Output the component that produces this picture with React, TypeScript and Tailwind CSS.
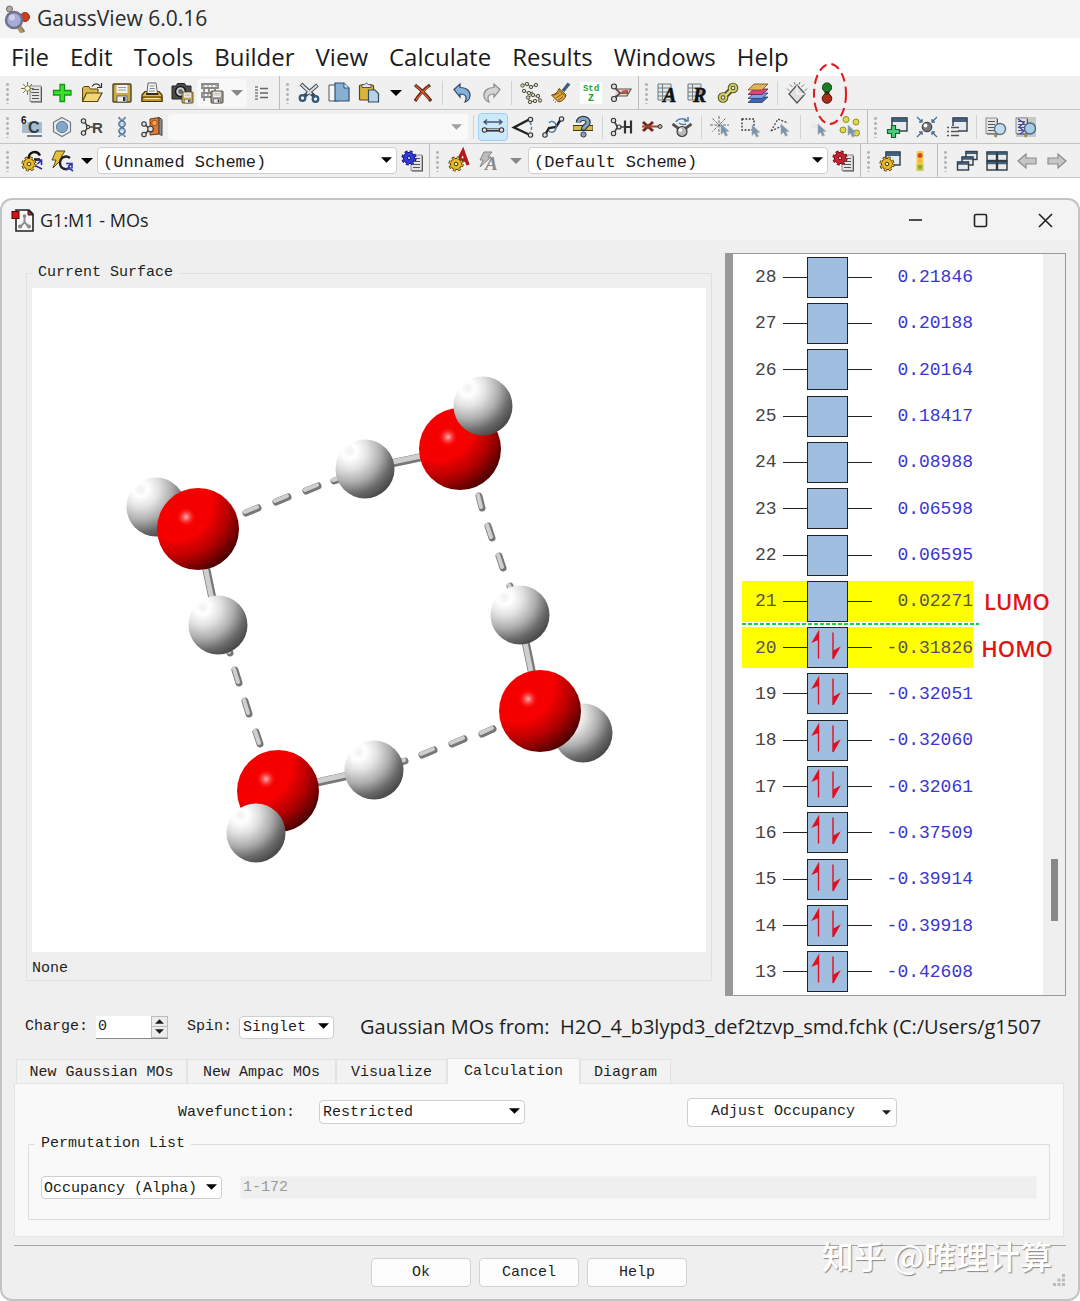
import React from "react";

/* ---------- small shapes shared by the toolbar icons ---------- */

type XY = { x?: number; y?: number };

const Gear = ({ x = 8, y = 13, fill = "#e8b92c", edge = "#4a3800", hub = "#fff2b0" }: XY & { fill?: string; edge?: string; hub?: string }) => (
  <g>
    <circle cx={x} cy={y} r="6" fill="none" stroke={edge} strokeWidth="3.2" strokeDasharray="2.7 2" />
    <circle cx={x} cy={y} r="5.6" fill={fill} stroke={edge} strokeWidth="1" />
    <circle cx={x} cy={y} r="6" fill="none" stroke={fill} strokeWidth="1.6" strokeDasharray="2 2.7" strokeDashoffset="-.35" />
    <circle cx={x} cy={y} r="1.8" fill={hub} stroke={edge} strokeWidth="1" />
  </g>
);

const Sheet = ({ x = 9, y = 5 }: XY) => (
  <g>
    <rect x={x + 1} y={y + 1} width="11" height="15.5" fill="#444" />
    <rect x={x} y={y} width="11" height="15.5" fill="#e2e5e8" stroke="#777" strokeWidth=".8" />
    <path d={`M${x + 2} ${y + 3.5}h7M${x + 2} ${y + 6.5}h7M${x + 2} ${y + 9.5}h7M${x + 2} ${y + 12.5}h7`} stroke="#555" strokeWidth="1.2" />
  </g>
);

const Cursor = ({ x = 11, y = 9 }: XY) => (
  <path transform={`translate(${x} ${y})`} d="M0 0v10.5l2.6-2.2 1.8 4 2.2-1-1.8-3.8h3.4z" fill="#7b93ab" stroke="#a8b4c0" strokeWidth=".6" />
);

const Atom = ({ x = 0, y = 0, r = 2.2 }: XY & { r?: number }) => (
  <circle cx={x} cy={y} r={r} fill="#e2e2e2" stroke="#333" strokeWidth="1.1" />
);

const Win = ({ x = 5, y = 2, w = 16, h = 13 }: XY & { w?: number; h?: number }) => (
  <g>
    <rect x={x} y={y} width={w} height={h} fill="#e6ebef" stroke="#303840" strokeWidth="1.4" />
    <rect x={x} y={y} width={w} height={h * 0.28} fill="#3f6285" stroke="#303840" strokeWidth=".6" />
  </g>
);

const Disk = ({ x = 2, y = 2, s = 18, fill = "#c9a94a" }: XY & { s?: number; fill?: string }) => (
  <g transform={`translate(${x} ${y}) scale(${s / 18})`}>
    <rect width="18" height="18" rx="1" fill={fill} stroke="#4d4420" strokeWidth="1.4" />
    <rect x="3.5" y="1" width="11" height="8" fill="#f4f4f4" />
    <path d="M5 3.5h8M5 6h8" stroke="#999" />
    <rect x="4" y="12" width="10" height="6" fill="#eee" stroke="#555" strokeWidth=".8" />
    <rect x="10" y="13" width="2.5" height="4" fill="#333" />
  </g>
);

/* ---------- toolbar icons, 22 x 22 ---------- */

const icons: Record<string, React.ReactNode> = {
  new: (
    <>
      <Sheet x={9} y={4} />
      <path d="M6.500 0v13M0 6.500h13M2 2l9 9M11 2l-9 9" stroke="#77744c" strokeWidth="1" />
      <circle cx="6.500" cy="6.500" r="2.600" fill="#fffbd0" stroke="#8b8640" />
    </>
  ),
  add: <path d="M9 2.500h4.500v6h6.500v4.500h-6.500v6.500h-4.500V13H2.500V8.500H9z" fill="#3fe02f" stroke="#0f9c10" strokeWidth="1.300" />,
  open: (
    <>
      <path d="M1.500 19V6l1.500-1.500h5L9.500 7H17v4" fill="#d9b64e" stroke="#59470f" />
      <path d="M1.500 19.500 5.500 11H21l-4.500 8.500z" fill="#f3d677" stroke="#59470f" strokeWidth="1.200" />
      <path d="M11 4.500c2-3.500 6-3.500 8.500 0M20.500 1v4.500H16" fill="none" stroke="#333" strokeWidth="1.200" />
    </>
  ),
  save: <Disk />,
  print: (
    <>
      <path d="M1 13 4 9.500h14l3 3.500v6.500H1z" fill="#e7bc39" stroke="#3c300a" strokeWidth="1.200" />
      <path d="M6 11.500 7 1h8l1.500 10.500z" fill="#f6f6f6" stroke="#666" />
      <path d="M8.500 4h5M8.500 6.500h5.500M8 9h6" stroke="#888" />
      <path d="M5 12h12.500" stroke="#222" strokeWidth="1.800" />
      <path d="M1 15h20v4.500H1z" fill="#c6991f" stroke="#3c300a" />
      <path d="M3.500 16.500h15" stroke="#fff0b0" />
    </>
  ),
  camera: (
    <>
      <path d="M1 4h4l1.500-2.500h7L15 4h5v13H1z" fill="#4b4b4b" stroke="#222" />
      <circle cx="9.500" cy="9.500" r="5" fill="#d2d2d2" stroke="#151515" strokeWidth="1.500" />
      <circle cx="9.500" cy="9.500" r="2.400" fill="#626d76" />
      <Disk x={11} y={10} s={11} />
    </>
  ),
  film: (
    <>
      <path d="M1 2h16v4H1zM1 11h12v4H1zM3 6v5M8 6v5M14 6v5M3 15v4" fill="none" stroke="#888" strokeWidth="1.800" />
      <path d="M2 3.500h16M2 13h10" stroke="#aaa" strokeWidth="2" strokeDasharray="2 2" />
      <Disk x={10} y={9} s={12} fill="#a0a0a0" />
    </>
  ),
  list: (
    <>
      <path d="M9 6.500h8M9 11h8M9 15.500h8" stroke="#666" strokeWidth="1.500" />
      <path d="M4 5h3M4 8h3M4 11h3M4 14h3M4 17h3" stroke="#444" strokeWidth="1.200" />
    </>
  ),
  cut: (
    <>
      <path d="M3 2l14 13M19.500 3 6 14.500" stroke="#3e4a52" strokeWidth="3.800" />
      <path d="M3.500 2.500l10 9.500M19 3.500l-10 8.500" stroke="#dce2e6" strokeWidth="1.900" />
      <circle cx="4.500" cy="16" r="2.800" fill="none" stroke="#35587a" strokeWidth="2.200" />
      <circle cx="17.500" cy="17" r="2.800" fill="none" stroke="#35587a" strokeWidth="2.200" />
    </>
  ),
  copy: (
    <>
      <path d="M1 3h9v16H1z" fill="#f6f6f6" stroke="#555" />
      <path d="M7 1h9l5 5v13H7z" fill="#86afd2" stroke="#2e506f" strokeWidth="1.200" />
      <path d="M16 1v5h5" fill="#d9e8f4" stroke="#2e506f" />
    </>
  ),
  paste: (
    <>
      <rect x="1.500" y="3" width="14" height="15" rx="1" fill="#d9b53e" stroke="#584714" strokeWidth="1.200" />
      <path d="M4 5.500V2.500h2.500l2-1.500 2 1.500H13v3z" fill="#e6e6e6" stroke="#555" />
      <path d="M10.500 8h6.500l3.500 3.500V20h-10z" fill="#b8d2e8" stroke="#34495c" strokeWidth="1.200" />
    </>
  ),
  remove: (
    <>
      <path d="M3 3c5 4 11 9 16 16M18 3C12 7 7 13 3 19" fill="none" stroke="#5e2615" strokeWidth="3.200" />
      <path d="M3.500 3.500c5 4 10 9 14 14M17 4C12 8 8 13 4 18" fill="none" stroke="#cf5a38" strokeWidth="1.600" />
    </>
  ),
  undo: (
    <path d="M3 7.500 9 2v3.500c7 0 10.500 4 10 8.500-.3 3-2 5-5 6 2-3.500 2-8-5-8v3z" fill="#87b1d6" stroke="#2d4c6a" strokeWidth="1.200" />
  ),
  redo: (
    <path d="M19 7.500 13 2v3.500C6 5.500 2.500 9.500 3 14c.3 3 2 5 5 6-2-3.500-2-8 5-8v3z" fill="#d5d5d5" stroke="#8a8a8a" strokeWidth="1.200" />
  ),
  molecules: (
    <>
      <path d="M2.500 3.500l4.500-1.500 4 3 5-2M4 9l5 2 4-1M8 15l5-2 5 2 2 4M8 15l2 5 5-1" fill="none" stroke="#555" />
      {[[2.500, 3.500], [7, 2], [11, 5], [16, 3], [4, 9], [9, 11], [13, 13], [8, 15.500], [18, 14], [20, 18.500], [10, 20], [15, 19]].map(([x, y]) => (
        <circle key={`${x}-${y}`} cx={x} cy={y} r="1.700" fill="#dcd89c" stroke="#444" strokeWidth=".9" />
      ))}
    </>
  ),
  broom: (
    <>
      <path d="M13 9l6-7.500" stroke="#3f5d7a" strokeWidth="3.500" />
      <path d="M9 6.500l7 6.500c-1 4-3.500 6-7.500 7L1.500 13c4-.5 6-2.500 7.500-6.500z" fill="#e2a93a" stroke="#67420f" />
      <path d="M9 8.500l5.500 5M3.500 13.500l6-3M6 16l6-4M8 18.500l5-4" stroke="#855b16" />
      <path d="M3 18h1M5 20h1" stroke="#888" strokeWidth="1.500" />
    </>
  ),
  std: (
    <>
      <rect width="22" height="22" fill="#fff" />
      <text x="11" y="9" textAnchor="middle" fontFamily="Liberation Mono" fontWeight="bold" fontSize="9" fill="#1aa331">Std</text>
      <text x="11" y="19" textAnchor="middle" fontFamily="Liberation Mono" fontWeight="bold" fontSize="10" fill="#1aa331">Z</text>
    </>
  ),
  plane: (
    <>
      <path d="M6 7h15l-4 7H5" fill="#f4d2ca" stroke="#555" strokeWidth="1.200" />
      <path d="M4 5l6 6-6 6M10 11h8" fill="none" stroke="#444" strokeWidth="1.600" />
      <path d="M12 10l6-1" stroke="#d34b33" strokeWidth="2.600" />
      <Atom x={4} y={4.500} r={2.500} />
      <Atom x={4} y={17} r={2.500} />
    </>
  ),
  labelA: (
    <>
      <path d="M1 2h13v16H1zM1 6h13M1 10h13M1 14h13M5.500 2v16" fill="#e4e8ea" stroke="#6d7b80" />
      <text x="6" y="20" fontFamily="Liberation Serif" fontStyle="italic" fontWeight="bold" fontSize="20" fill="#111" stroke="#111" strokeWidth=".5">A</text>
    </>
  ),
  labelR: (
    <>
      <path d="M1 2h13v16H1zM1 6h13M1 10h13M1 14h13M5.500 2v16" fill="#e4e8ea" stroke="#6d7b80" />
      <text x="6" y="20" fontFamily="Liberation Serif" fontStyle="italic" fontWeight="bold" fontSize="20" fill="#111" stroke="#111" strokeWidth=".5">R</text>
    </>
  ),
  link: (
    <>
      <path d="M8 14l6-6" stroke="#4a4818" strokeWidth="6" />
      <circle cx="6" cy="15.500" r="3.300" fill="none" stroke="#4a4818" strokeWidth="4" />
      <circle cx="16" cy="6" r="3.300" fill="none" stroke="#4a4818" strokeWidth="4" />
      <circle cx="6" cy="15.500" r="3.300" fill="none" stroke="#cfca68" strokeWidth="2.200" />
      <circle cx="16" cy="6" r="3.300" fill="none" stroke="#cfca68" strokeWidth="2.200" />
      <path d="M8.500 13.500l5-5" stroke="#d8d47c" strokeWidth="2.500" />
    </>
  ),
  layers: (
    <>
      <path d="M1 20.500 7 15h14l-6 5.500z" fill="#3b68ae" stroke="#263d70" strokeWidth=".8" />
      <path d="M1 16.500 7 11h14l-6 5.500z" fill="#7fa0de" stroke="#263d70" strokeWidth=".8" />
      <path d="M1 12.500 7 7h14l-6 5.500z" fill="#d9467c" stroke="#6b1735" strokeWidth=".8" />
      <path d="M1 8 7 2h14l-6 6z" fill="#e3b35c" stroke="#6d4b16" strokeWidth=".8" />
    </>
  ),
  diamond: (
    <>
      <path d="M11 3l8 9-8 9-8-9z" fill="#e0e0e0" stroke="#555" strokeWidth="1.300" />
      <path d="M11 3v9l8 0" fill="none" stroke="#fafafa" />
      <path d="M1 6.500 3.500 9M4 2.500 6.500 5M8 0l1 2.500M21 6.500 18.500 9M18 2.500 15.500 5M14 0l-1 2.500" stroke="#777" />
    </>
  ),
  orbital: (
    <>
      <circle cx="11" cy="5.500" r="4.600" fill="#1b7d22" stroke="#0e4213" />
      <circle cx="11" cy="16.500" r="4.800" fill="#a5301a" stroke="#571207" />
      <path d="M8.500 10.800h5" stroke="#242c10" strokeWidth="2.200" />
    </>
  ),
  element: (
    <>
      <path d="M1 8h5v-2h15v11H1z" fill="#a9bccb" />
      <path d="M6 20h15" stroke="#708090" strokeWidth="2" />
      <text x="0" y="8" fontFamily="Liberation Sans" fontWeight="bold" fontSize="10" fill="#111">6</text>
      <text x="7" y="16.500" fontFamily="Liberation Sans" fontWeight="bold" fontSize="16" fill="#2c3c4b">C</text>
    </>
  ),
  ring: (
    <>
      <path d="M11 1.500l8.500 4.800v9.400L11 20.500l-8.500-4.800V6.300z" fill="#e8edf1" stroke="#6d7880" strokeWidth="1.200" />
      <circle cx="11" cy="11" r="5.600" fill="#82a6c9" stroke="#5c7b98" />
    </>
  ),
  fragment: (
    <>
      <path d="M3 5l4 6-4 6M6 11H12" fill="none" stroke="#444" strokeWidth="1.500" />
      <Atom x={2.500} y={5} />
      <Atom x={2.500} y={17} />
      <Atom x={7} y={11} r={1.600} />
      <text x="11" y="16.500" fontFamily="Liberation Sans" fontWeight="bold" fontSize="15" fill="#444">R</text>
    </>
  ),
  helix: (
    <>
      <path d="M8 1c0 4 6 3 6 7s-6 3-6 7 6 3 6 6M14 1c0 4-6 3-6 7s6 3 6 7-6 3-6 6" fill="none" stroke="#50779b" strokeWidth="1.700" />
      <path d="M8 3h6M8 8h6M8 14h6M8 19h6" stroke="#9bb5cb" />
    </>
  ),
  book: (
    <>
      <path d="M9 3l9-1.500v16.500l-9 1z" fill="#e07a2c" stroke="#5f3b22" />
      <path d="M18 1.500l3 2v16l-3-1.500z" fill="#8c8c8c" stroke="#444" />
      <circle cx="13.500" cy="7" r="2.800" fill="#f0a35b" stroke="#a8500f" />
      <path d="M3.500 8l5 5-5 6M8 13h5" fill="none" stroke="#444" strokeWidth="1.600" />
      <Atom x={3} y={8} />
      <Atom x={3} y={18.500} />
      <Atom x={9.500} y={13} r={2.800} />
    </>
  ),
  bond: (
    <>
      <path d="M2 6h18M5 3.500 2 6l3 2.500M17 3.500 20 6l-3 2.500" fill="none" stroke="#3f5b73" strokeWidth="1.300" />
      <path d="M3 14h16" stroke="#333" strokeWidth="3.200" />
      <path d="M4 13.500h14" stroke="#bbb" />
      <Atom x={2.500} y={14} />
      <Atom x={19.500} y={14} />
    </>
  ),
  angle: (
    <>
      <path d="M18 3 2 11.500 18 19" fill="none" stroke="#222" strokeWidth="2.400" />
      <path d="M18 6c2 4 2 7 0 10" fill="none" stroke="#46759f" strokeDasharray="3 2" strokeWidth="1.400" />
      <Atom x={18.500} y={3.500} />
      <Atom x={18.500} y={19} />
    </>
  ),
  dihedral: (
    <>
      <path d="M3 19l4-7 7-1 5-8" fill="none" stroke="#222" strokeWidth="2.400" />
      <path d="M7 7c3-4 8 0 7 5s-5 5-7 3" fill="none" stroke="#4a7faf" strokeWidth="1.400" />
      <Atom x={3} y={19} />
      <Atom x={19.500} y={3} />
    </>
  ),
  inquire: (
    <>
      <path d="M1 12h20" stroke="#443a10" strokeWidth="6" />
      <path d="M1.500 12h19" stroke="#d3bb48" strokeWidth="4" />
      <path d="M6.500 6.500c0-5.500 9.500-5.500 9.500 0 0 3.500-4.500 3-4.500 7.500" fill="none" stroke="#26394a" strokeWidth="5.400" />
      <path d="M6.500 6.500c0-5.500 9.500-5.500 9.500 0 0 3.500-4.500 3-4.500 7" fill="none" stroke="#8aa4b9" strokeWidth="3" />
      <circle cx="11.500" cy="18.500" r="2.600" fill="#8aa4b9" stroke="#26394a" />
    </>
  ),
  addH: (
    <>
      <path d="M2.500 4l4 7-4 7M6.500 11H13" fill="none" stroke="#444" strokeWidth="1.600" />
      <Atom x={2.500} y={4.500} />
      <Atom x={2.500} y={17.500} />
      <Atom x={8} y={11} r={2} />
      <path d="M14 4.500v13M20 4.500v13M14 11h6" stroke="#333" strokeWidth="2.200" />
    </>
  ),
  deleteAtom: (
    <>
      <path d="M2 6l10 9M12 6l-10 9" stroke="#73291a" strokeWidth="3" />
      <path d="M1 10.500h17" stroke="#a14831" strokeWidth="2" />
      <circle cx="19" cy="10.500" r="2" fill="#b8ada9" stroke="#333" />
    </>
  ),
  invert: (
    <>
      <path d="M1.500 8l9.500 7 9.500-7" fill="none" stroke="#555" strokeWidth="2.800" />
      <circle cx="11" cy="15.500" r="5" fill="#b9b9b9" stroke="#3c3c3c" strokeWidth="1.200" />
      <path d="M5 6c2-4 9-4 11-1M17 1v4h-4M15 8c-3 1-6 0-7-1" fill="none" stroke="#4b7ba6" strokeWidth="1.500" />
      <circle cx="9.500" cy="14" r="1.800" fill="#fff" />
    </>
  ),
  pickAtom: (
    <>
      <path d="M9 0v19M0 9h19M2.500 2.500l13 13M15.500 2.500l-13 13" stroke="#666" strokeDasharray="3 1.300" />
      <Cursor x={11} y={8} />
    </>
  ),
  pickBox: (
    <>
      <path d="M2 3h12v11H2z" fill="none" stroke="#333" strokeWidth="1.400" strokeDasharray="1.800 1.600" />
      <Cursor x={12} y={9} />
    </>
  ),
  pickLasso: (
    <>
      <path d="M1 15 8 3l10 4M1 15l11-5" fill="none" stroke="#444" strokeWidth="1.300" strokeDasharray="2 1.500" />
      <Cursor x={11} y={8} />
    </>
  ),
  pickNone: (
    <>
      <path d="M2 10h8" stroke="#e8e8e8" strokeWidth="5" />
      <Cursor x={9} y={8} />
    </>
  ),
  pickAll: (
    <>
      {[[7, 3.500], [17, 6], [4, 14], [17.500, 17]].map(([x, y]) => (
        <circle key={x} cx={x} cy={y} r="3" fill="#dcd84a" stroke="#918d2a" />
      ))}
      <Cursor x={9} y={9} />
    </>
  ),
  addView: (
    <>
      <Win x={6} y={2} w={15} h={13} />
      <path d="M5.500 9.500h4v4h4v4h-4v4h-4v-4h-4v-4h4z" fill="#4ecb7a" stroke="#10632f" strokeWidth="1.200" />
    </>
  ),
  center: (
    <>
      <path d="M1 1l5 5M21 1l-5 5M1 21l5-5M21 21l-5-5M6 3v3H3M16 3v3h3M6 19v-3H3M16 19v-3h3" fill="none" stroke="#4a6d8f" strokeWidth="1.300" />
      <circle cx="11" cy="11" r="4.800" fill="#777" stroke="#333" />
      <circle cx="9.500" cy="9.500" r="1.900" fill="#fff" />
    </>
  ),
  viewList: (
    <>
      <Win x={7} y={2} w={14} h={13} />
      <path d="M0 10h12v11H0z" fill="#f0f0f0" />
      <path d="M1 11.500h2M1 15.500h2M1 19.500h2M5 11.500h8M5 15.500h8M5 19.500h8" stroke="#555" strokeWidth="1.600" />
    </>
  ),
  findSheet: (
    <>
      <Sheet x={1} y={2} />
      <path d="M12 17l-2 4" stroke="#a28b56" strokeWidth="3" />
      <circle cx="15" cy="13" r="5.500" fill="#c3dcf0" stroke="#5b7488" strokeWidth="1.400" />
    </>
  ),
  findMol: (
    <>
      <rect x="1" y="1" width="20" height="20" fill="#c6c9cc" />
      <Sheet x={1} y={2} />
      <path d="M3 3l6 4-5 4 5 4-4 3" fill="none" stroke="#4544b9" strokeWidth="1.400" />
      <path d="M12 17l-2 4" stroke="#a28b56" strokeWidth="3" />
      <circle cx="15" cy="12.500" r="5.500" fill="#a9cbe7" stroke="#48657e" strokeWidth="1.400" />
    </>
  ),
  gearG: (
    <>
      <path d="M19 5.500C16 0 8 1 7.500 9M19 9.500h-6" fill="none" stroke="#111" strokeWidth="2.400" />
      <Gear x={8} y={14} />
      <path d="M15 10h5.500v5M20.500 10l-4 4M15 16l6 3" fill="none" stroke="#2a2bab" strokeWidth="1.600" />
    </>
  ),
  boltG: (
    <>
      <path d="M5 1h9l-4 6h3L2 18l3-8H1z" fill="#e4c13b" stroke="#594713" />
      <path d="M19 8c-4-3-10-1-10 5s7 8 10 4" fill="none" stroke="#222" strokeWidth="2.400" />
      <path d="M15 13.500h6v5M21 13.500l-4 3M15 20l3-2 4 3" fill="none" stroke="#3439ab" strokeWidth="1.600" />
    </>
  ),
  gearSheetBlue: (
    <>
      <Sheet x={10} y={5} />
      <Gear x={8} y={8} fill="#333bdd" edge="#151568" hub="#aeb5ff" />
    </>
  ),
  gearA: (
    <>
      <path d="M9 13 15 1l5 14M11 10h7" fill="none" stroke="#b31b1b" strokeWidth="3.400" />
      <Gear x={8} y={14} />
    </>
  ),
  boltA: (
    <>
      <path d="M6 2h8l-4 5h3L2 17l3-7H2z" fill="#bcbcbc" stroke="#858585" />
      <text x="7" y="19.500" fontFamily="Liberation Serif" fontStyle="italic" fontWeight="bold" fontSize="19" fill="#888">A</text>
    </>
  ),
  gearSheetRed: (
    <>
      <Sheet x={10} y={5} />
      <Gear x={8} y={8} fill="#c72430" edge="#640f17" hub="#f0a1a6" />
    </>
  ),
  gearWin: (
    <>
      <Win x={7} y={2} w={14} h={13} />
      <Gear x={8} y={14} />
    </>
  ),
  light: (
    <>
      <rect x="7.500" y="1" width="7" height="20" rx="1" fill="#f3cf4c" />
      <path d="M7.500 14h7v7h-7z" fill="#c8cf52" />
      <circle cx="11" cy="5.500" r="2.500" fill="#d24a1c" />
      <circle cx="11" cy="11" r="2" fill="#f4b52b" />
      <circle cx="11" cy="17" r="2.200" fill="#92a92f" />
    </>
  ),
  cascade: (
    <>
      <Win x={10} y={1.500} w={11} h={8} />
      <Win x={6} y={7} w={11} h={8} />
      <Win x={1.500} y={12} w={11} h={8} />
    </>
  ),
  tile: (
    <>
      <Win x={1} y={2} w={9.500} h={8.500} />
      <Win x={11.500} y={2} w={9.500} h={8.500} />
      <Win x={1} y={11.500} w={9.500} h={8.500} />
      <Win x={11.500} y={11.500} w={9.500} h={8.500} />
    </>
  ),
  prev: <path d="M2 11l8-7v4h10v6H10v4z" fill="#c6c6c6" stroke="#8b8b8b" strokeWidth="1.200" />,
  next: <path d="M20 11l-8-7v4H2v6h10v4z" fill="#c6c6c6" stroke="#8b8b8b" strokeWidth="1.200" />,
};

/* ---------- toolbar parts ---------- */

const Tool = ({ name, active }: { name: string; active?: boolean }) => (
  <button
    aria-label={name}
    className={
      active
        ? "flex h-7 w-[30px] shrink-0 items-center justify-center rounded-sm border border-[#99d1f7] bg-[#cce8fb]"
        : "flex h-7 w-[30px] shrink-0 items-center justify-center"
    }
  >
    <svg viewBox="0 0 22 22" className="size-[22px] shrink-0 overflow-visible">{icons[name]}</svg>
  </button>
);

const Tools = ({ names }: { names: string[] }) => (
  <>{names.map((n) => <Tool key={n} name={n} />)}</>
);

const Down = ({ className }: { className: string }) => (
  <svg viewBox="0 0 12 6" className={className} fill="currentColor">
    <path d="M0 0h12L6 6z" />
  </svg>
);

const Drop = ({ label, muted, wide }: { label: string; muted?: boolean; wide?: boolean }) => (
  <button
    aria-label={label}
    className={`flex h-6 shrink-0 items-center justify-center ${wide ? "w-6" : "w-5"} ${muted ? "text-[#888]" : "text-black"}`}
  >
    <Down className="h-[6px] w-3" />
  </button>
);

const Grip = () => (
  <span className="mr-[5px] ml-[6px] h-[22px] w-[3px] shrink-0 bg-[radial-gradient(circle,#b5b5b5_1px,transparent_2px)] bg-[length:3px_5px]" />
);

const Sep = () => <span className="mx-1 h-6 w-px shrink-0 bg-[#d2d2d2]" />;

const Group = ({ children, first, last }: { children: React.ReactNode; first?: boolean; last?: boolean }) => (
  <div className={last ? "flex flex-1 items-center" : "flex items-center border-r border-[#bdbdbd] pr-[2px]"}>
    <Grip />
    <div className={first ? "flex items-center pl-[3px]" : "flex items-center"}>{children}</div>
  </div>
);

const Row = ({ children }: { children: React.ReactNode }) => (
  <div className="flex h-[34px] items-stretch border-b border-[#c4c4c4] bg-[#f0f0f0]">{children}</div>
);

const Combo = ({ label, value, className, textClass }: { label: string; value: string; className: string; textClass: string }) => (
  <div className={`relative shrink-0 ${className}`}>
    <select
      aria-label={label}
      className={`h-full w-full appearance-none rounded border border-[#cfcfcf] bg-white pt-[2px] font-['Liberation_Mono',monospace] text-[#1c1c1c] ${textClass}`}
    >
      <option>{value}</option>
    </select>
    <Down className="pointer-events-none absolute top-[calc(50%-4px)] right-[5px] h-[6px] w-[11px] text-black" />
  </div>
);

/* ---------- molecule ---------- */

const bonds = [
  [198, 529, 218, 625],
  [460, 449, 365, 469],
  [540, 711, 520, 615],
  [278, 791, 374, 770],
];
const dashes = [
  [246, 513, 258, 508], [276, 502, 288, 497], [306, 491, 318, 486], [334, 481, 340, 479],
  [479, 496, 482, 508], [488, 526, 492, 538], [499, 556, 503, 568], [510, 586, 512, 592],
  [482, 734, 493, 729], [452, 744, 464, 739], [422, 755, 434, 750], [398, 763, 405, 761],
  [228, 648, 230, 653], [235, 670, 239, 683], [245, 701, 249, 714], [256, 732, 260, 744],
];
const Stick = ({ p, w }: { p: number[]; w: number }) => (
  <>
    <line x1={p[0]} y1={p[1]} x2={p[2]} y2={p[3]} stroke="#777" strokeWidth={w} strokeLinecap="round" />
    <line x1={p[0] - 1} y1={p[1] - 1} x2={p[2] - 1} y2={p[3] - 1} stroke="#cfcfcf" strokeWidth={w - 3} strokeLinecap="round" />
  </>
);
const H = ({ x, y }: { x: number; y: number }) => <circle cx={x} cy={y} r="29.5" fill="url(#hydrogen)" />;
const O = ({ x, y }: { x: number; y: number }) => (
  <>
    <circle cx={x} cy={y} r="41" fill="url(#oxygen)" />
    <circle cx={x - 12} cy={y - 12} r="10" fill="url(#glint)" />
  </>
);

const Molecule = () => (
  <svg viewBox="32 288 674 664" className="block w-full bg-white" role="img" aria-label="Water tetramer">
    <defs>
      <radialGradient id="hydrogen" cx=".24" cy=".2" r=".88">
        <stop offset="0" stopColor="#f0f0f0" />
        <stop offset=".14" stopColor="#fff" />
        <stop offset=".35" stopColor="#e2e2e2" />
        <stop offset=".6" stopColor="#adadad" />
        <stop offset=".82" stopColor="#6a6a6a" />
        <stop offset="1" stopColor="#484848" />
      </radialGradient>
      <radialGradient id="oxygen" cx=".22" cy=".2" r=".92">
        <stop offset="0" stopColor="#f40000" />
        <stop offset=".48" stopColor="#f60000" />
        <stop offset=".72" stopColor="#b40000" />
        <stop offset="1" stopColor="#420000" />
      </radialGradient>
      <radialGradient id="glint">
        <stop offset="0" stopColor="#ffb9b9" />
        <stop offset=".5" stopColor="#ff5050" stopOpacity=".6" />
        <stop offset="1" stopColor="#ff0000" stopOpacity="0" />
      </radialGradient>
    </defs>
    {dashes.map((p) => <Stick key={p.join()} p={p} w={7} />)}
    {bonds.map((p) => <Stick key={p.join()} p={p} w={8} />)}
    <H x={156} y={507} />
    <H x={583} y={733} />
    <O x={198} y={529} />
    <O x={460} y={449} />
    <O x={540} y={711} />
    <O x={278} y={791} />
    <H x={365} y={469} />
    <H x={483} y={406} />
    <H x={520} y={615} />
    <H x={218} y={625} />
    <H x={374} y={770} />
    <H x={256} y={833} />
  </svg>
);

/* ---------- orbital list ---------- */

const orbitals: [number, string][] = [
  [28, "0.21846"], [27, "0.20188"], [26, "0.20164"], [25, "0.18417"],
  [24, "0.08988"], [23, "0.06598"], [22, "0.06595"], [21, "0.02271"],
  [20, "-0.31826"], [19, "-0.32051"], [18, "-0.32060"], [17, "-0.32061"],
  [16, "-0.37509"], [15, "-0.39914"], [14, "-0.39918"], [13, "-0.42608"],
];
const frontier: Record<number, string> = { 21: "LUMO", 20: "HOMO" };

const Orbital = ({ n, energy }: { n: number; energy: string }) => {
  const mark = frontier[n];
  return (
    <li className="relative flex flex-1 items-center pl-[9px]">
      <div className={mark ? "flex h-[41px] w-[231px] items-center bg-[#ffff00] pl-[13px] text-[#555]" : "flex h-[41px] w-[231px] items-center pl-[13px] text-[#444]"}>
        <span>{n}</span>
        <span className="ml-[6px] h-px w-6 bg-[#222]" />
        <svg viewBox="0 0 39 39" className="size-[41px] border border-[#222] bg-[#a0bfe0]" fill="#e01020" stroke="#e01020">
          {n <= 20 && (
            <>
              <path d="M10.500 30.500V4L5 13.500l5.500-2.500z" strokeWidth="1.400" />
              <path d="M25 4.500v26.500L31 20l-6 3.500z" strokeWidth="1.400" />
            </>
          )}
        </svg>
        <span className="h-px w-6 bg-[#222]" />
        <span className={mark ? "ml-auto" : "ml-auto text-[#3a36d0]"}>{energy}</span>
      </div>
      {mark && (
        <span className="absolute left-[244px] z-10 w-[80px] text-center font-['Open_Sans',sans-serif] text-[22px] font-semibold text-[#e01414]">{mark}</span>
      )}
      {n === 21 && <span className="absolute bottom-0 left-[9px] h-[2px] w-[237px] bg-[repeating-linear-gradient(90deg,#12d636_0_4px,transparent_4px_6px)]" />}
    </li>
  );
};

/* ---------- page ---------- */

const menus = ["File", "Edit", "Tools", "Builder", "View", "Calculate", "Results", "Windows", "Help"];
const tabs = [
  { name: "New Gaussian MOs", w: "w-[171px]" },
  { name: "New Ampac MOs", w: "w-[149px]" },
  { name: "Visualize", w: "w-[111px]" },
  { name: "Calculation", w: "w-[133px]" },
  { name: "Diagram", w: "w-[91px]" },
];

const MainWindow = () => (
  <header>
    <div className="flex h-[38px] items-center gap-[6px] bg-[#f3f3f3] px-[3px] text-[21px] text-[#2a2a2a]">
      <svg viewBox="0 0 28 28" className="size-7">
        <path d="M8 8 7 4M16 15l7-1M16 20l5 7" stroke="#777" strokeWidth="3" />
        <circle cx="6.500" cy="4" r="3" fill="#b3a9a3" stroke="#6f6a68" />
        <circle cx="22" cy="12" r="4.500" fill="#d23c1c" stroke="#8d2c18" />
        <path d="M15 21l3 5" stroke="#b39556" strokeWidth="4" strokeLinecap="round" />
        <circle cx="11" cy="15" r="8" fill="#a7abd8" stroke="#70728c" strokeWidth="2.500" />
        <circle cx="9" cy="12.500" r="3" fill="#ced1ee" />
      </svg>
      <span>GaussView 6.0.16</span>
    </div>
    <nav className="flex h-[38px] items-center gap-[21px] bg-white px-[11px] text-2xl text-[#1b1b1b]">
      {menus.map((m) => <button key={m}>{m}</button>)}
    </nav>

    <Row>
      <Group first>
        <Tools names={["new", "add", "open", "save", "print", "camera"]} />
        <div className="flex items-center rounded bg-[#f8f8f8]">
          <Tool name="film" />
          <Drop label="Movie options" muted />
        </div>
        <Tool name="list" />
      </Group>
      <Group>
        <Tools names={["cut", "copy", "paste"]} />
        <Drop label="Paste options" wide />
        <Tool name="remove" />
        <Sep />
        <Tools names={["undo", "redo"]} />
        <Sep />
        <Tools names={["molecules", "broom", "std", "plane"]} />
      </Group>
      <Group last>
        <Tools names={["labelA", "labelR", "link", "layers"]} />
        <Sep />
        <Tool name="diamond" />
        <div className="relative z-10">
          <Tool name="orbital" />
          <svg viewBox="0 0 36 64" className="pointer-events-none absolute -top-[17px] left-0 h-16 w-9">
            <ellipse cx="18" cy="32" rx="16" ry="30" fill="none" stroke="#e0181c" strokeWidth="2" strokeDasharray="9 5" />
          </svg>
        </div>
      </Group>
    </Row>

    <Row>
      <Group first>
        <Tools names={["element", "ring", "fragment", "helix", "book"]} />
        <div className="relative mx-px h-[26px] w-[300px]">
          <select aria-label="Fragment" className="h-full w-full appearance-none rounded bg-[#f9f9f9]" />
          <Down className="pointer-events-none absolute top-[10px] right-[6px] h-[6px] w-[11px] text-[#a0a0a0]" />
        </div>
        <Sep />
        <Tool name="bond" active />
        <Tools names={["angle", "dihedral", "inquire"]} />
        <Sep />
        <Tools names={["addH", "deleteAtom", "invert"]} />
        <Sep />
        <Tools names={["pickAtom", "pickBox", "pickLasso"]} />
        <Sep />
        <Tools names={["pickNone", "pickAll"]} />
      </Group>
      <Group last>
        <Tools names={["addView", "center", "viewList"]} />
        <Sep />
        <Tools names={["findSheet", "findMol"]} />
      </Group>
    </Row>

    <Row>
      <Group first>
        <Tools names={["gearG", "boltG"]} />
        <Drop label="Quick launch" />
        <Combo label="Calculation scheme" value="(Unnamed Scheme)" className="h-[27px] w-[300px]" textClass="px-[5px] text-[17px]" />
        <Tool name="gearSheetBlue" />
      </Group>
      <Group>
        <Tools names={["gearA", "boltA"]} />
        <Drop label="Display options" muted wide />
        <Combo label="Display scheme" value="(Default Scheme)" className="h-[27px] w-[300px]" textClass="px-[5px] text-[17px]" />
        <Tool name="gearSheetRed" />
      </Group>
      <Group>
        <Tools names={["gearWin", "light"]} />
      </Group>
      <Group last>
        <Tools names={["cascade", "tile", "prev", "next"]} />
      </Group>
    </Row>
  </header>
);

export default function App() {
  return (
    <div className="min-h-screen w-full overflow-hidden bg-white font-['Open_Sans',sans-serif]">
      <MainWindow />

      <main className="relative mt-5 rounded-xl border-2 border-[#c3c3c3] bg-[#efefef] font-['Liberation_Mono',monospace] text-[15px] leading-5 text-[#1e1e1e]">
        <div className="flex h-10 items-center rounded-t-xl bg-[#f3f3f3] pl-[9px] font-['Open_Sans',sans-serif] text-lg">
          <svg viewBox="0 0 24 24" className="size-6">
            <path d="M5 2h13l4 4v17H5z" fill="#f8f8f8" stroke="#222" strokeWidth="1.600" />
            <path d="M17 2v5h5z" fill="#c22" stroke="#222" />
            <path d="M13.500 8v6l-4 5M13.500 14l4.500 5" fill="none" stroke="#8b8f94" strokeWidth="2" />
            <circle cx="13.500" cy="8" r="1.800" fill="#888" />
            <circle cx="9" cy="18.500" r="2" fill="#888" />
            <circle cx="18" cy="18.500" r="2" fill="#888" />
            <rect x="1" y="3.500" width="7" height="7" fill="#d41414" stroke="#4c0808" />
          </svg>
          <span className="ml-[5px] flex-1">G1:M1 - MOs</span>
          {[
            ["Minimize", "M2 8h13"],
            ["Maximize", "M4 2.500h9q1.500 0 1.500 1.500v9q0 1.500-1.500 1.500H4q-1.500 0-1.500-1.500V4q0-1.500 1.500-1.500z"],
            ["Close", "M2 2l13 13M15 2 2 15"],
          ].map(([name, d]) => (
            <button key={name} aria-label={name} className="flex h-10 w-[65px] items-center justify-center">
              <svg viewBox="0 0 17 17" className="size-[17px]" fill="none" stroke="#222" strokeWidth="1.600"><path d={d} /></svg>
            </button>
          ))}
        </div>

        <div className="flex gap-[13px] pr-3 pl-6">
          <fieldset className="mt-[23px] mb-[15px] min-w-0 flex-1 border border-[#e0e0e0] px-[5px] pt-[5px]">
            <legend className="px-[6px]">Current Surface</legend>
            <Molecule />
            <p className="pt-[7px] pb-px">None</p>
          </fieldset>
          <section aria-label="Orbitals" className="mt-[13px] flex w-[341px] border border-l-[8px] border-[#999] bg-white text-lg">
            <ol className="flex flex-1 flex-col">
              {orbitals.map(([n, e]) => <Orbital key={n} n={n} energy={e} />)}
            </ol>
            <div className="flex w-[22px] flex-col items-center bg-[#efefef]">
              <span className="grow-[604]" />
              <span className="h-[62px] w-[7px] bg-[#888]" />
              <span className="grow-[74]" />
            </div>
          </section>
        </div>

        <div className="flex h-[62px] items-center pr-[26px] pl-[23px]">
          <label htmlFor="charge">Charge:</label>
          <div className="ml-[8px] flex h-[23px] w-[72px] border-b border-[#888] bg-white">
            <input id="charge" defaultValue="0" className="min-w-0 flex-1 px-[2px] outline-none" />
            <div className="flex w-[17px] flex-col border border-[#bbb] bg-[#ececec]">
              <button aria-label="Increase charge" className="flex flex-1 items-center justify-center border-b border-[#bbb]"><Down className="h-[5px] w-[9px] rotate-180" /></button>
              <button aria-label="Decrease charge" className="flex flex-1 items-center justify-center"><Down className="h-[5px] w-[9px]" /></button>
            </div>
          </div>
          <label htmlFor="spin" className="ml-[19px]">Spin:</label>
          <div className="relative ml-[7px] h-[23px] w-[95px]">
            <select id="spin" className="h-full w-full appearance-none rounded border border-[#cfcfcf] bg-white px-[3px] pt-px">
              <option>Singlet</option>
            </select>
            <Down className="pointer-events-none absolute top-[7px] right-[5px] h-[6px] w-[11px] text-black" />
          </div>
          <p className="ml-[26px] min-w-0 flex-1 overflow-hidden font-['Open_Sans',sans-serif] text-xl leading-7 whitespace-pre">
            {"Gaussian MOs from:  H2O_4_b3lypd3_def2tzvp_smd.fchk (C:/Users/g1507"}
          </p>
        </div>

        <div role="tablist" className="mr-[15px] ml-[14px] flex items-end">
          {tabs.map(({ name, w }) => (
            <button
              key={name}
              role="tab"
              aria-selected={name === "Calculation"}
              className={
                name === "Calculation"
                  ? `${w} z-10 -mb-px h-[26px] border border-b-0 border-[#e4e4e4] bg-[#f9f9f9]`
                  : `${w} h-6 border border-b-0 border-[#e2e2e2] bg-[#f2f2f2] pt-[2px]`
              }
            >
              {name}
            </button>
          ))}
        </div>
        <div role="tabpanel" className="mr-[14px] ml-3 border border-[#e4e4e4] bg-[#f9f9f9] px-[13px] pt-[14px] pb-4">
          <div className="flex h-7 items-center pl-[150px]">
            <span className="pt-[2px]">Wavefunction:</span>
            <Combo label="Wavefunction" value="Restricted" className="ml-[24px] h-6 w-[206px]" textClass="px-[3px] text-[15px]" />
            <button className="ml-[162px] flex h-[29px] w-[210px] items-center justify-end gap-[27px] rounded border border-[#cfcfcf] bg-white pr-[5px]">
              Adjust Occupancy
              <Down className="h-[5px] w-[9px]" />
            </button>
          </div>
          <fieldset className="mt-2 border border-[#dedede] px-3 pt-[22px] pb-[20px]">
            <legend className="-ml-[6px] px-[6px]">Permutation List</legend>
            <div className="flex items-center gap-[18px]">
              <Combo label="Permutation" value="Occupancy (Alpha)" className="h-[23px] w-[181px]" textClass="pl-[2px] text-[15px]" />
              <input aria-label="Orbital range" disabled defaultValue="1-172" className="h-[23px] min-w-0 flex-1 border border-[#f3f3f3] bg-[#efefef] px-[2px] text-[#999]" />
            </div>
          </fieldset>
        </div>

        <footer className="mt-2 mr-3 ml-3 flex h-[54px] items-center justify-center gap-2 border-t border-[#a4a4a4] pr-[22px]">
          {["Ok", "Cancel", "Help"].map((b) => (
            <button key={b} className="h-[29px] w-[100px] rounded border border-[#d2d2d2] bg-[#fdfdfd]">{b}</button>
          ))}
        </footer>
        <svg viewBox="0 0 12 12" className="absolute right-[13px] bottom-[13px] size-3" fill="#bbb">
          <path d="M9 0h3v3H9zM9 4.500h3v3H9zM4.500 4.500h3v3h-3zM9 9h3v3H9zM4.500 9h3v3h-3zM0 9h3v3H0z" />
        </svg>
        <span className="absolute right-[26px] bottom-[26px] font-['Noto_Sans_CJK_SC',sans-serif] text-[32px] leading-9 font-medium text-white [text-shadow:1px_1px_1px_#888]">知乎 @唯理计算</span>
      </main>
    </div>
  );
}
